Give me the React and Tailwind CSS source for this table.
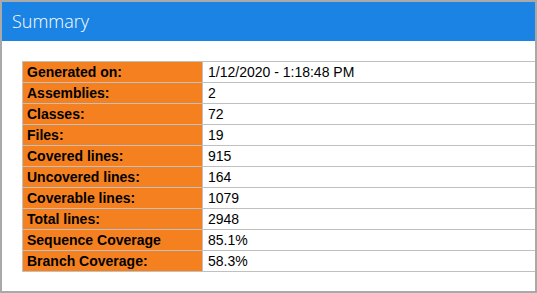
const rows = [
  ["Generated on:", "1/12/2020 - 1:18:48 PM"],
  ["Assemblies:", "2"],
  ["Classes:", "72"],
  ["Files:", "19"],
  ["Covered lines:", "915"],
  ["Uncovered lines:", "164"],
  ["Coverable lines:", "1079"],
  ["Total lines:", "2948"],
  ["Sequence Coverage", "85.1%"],
  ["Branch Coverage:", "58.3%"],
];

export default function App() {
  return (
    <div className="w-[537px] h-[293px] border-2 border-[#a9a9a9] bg-white overflow-hidden">
      <div
        className="h-[39px] bg-[#1a83e3] pl-[10px] flex items-center text-white text-[18px] font-light"
        style={{ fontFamily: '"Open Sans", sans-serif' }}
      >
        Summary
      </div>
      <div className="pt-[20px] pl-[20px]">
        {/* table runs past the card edge, the card clips it */}
        <table
          className="w-[560px] border-collapse text-[14px] text-black"
          style={{ fontFamily: '"Liberation Sans", Arial, sans-serif' }}
        >
          <tbody>
            {rows.map(([label, value]) => (
              <tr key={label} className="h-[21px]">
                <th className="w-[180px] bg-[#f5801f] border border-[#c0c0c0] text-left font-bold pl-[4px] py-0 leading-[20px]">
                  {label}
                </th>
                <td className="border border-[#c0c0c0] pl-[5px] py-0 leading-[20px]">
                  {value}
                </td>
              </tr>
            ))}
          </tbody>
        </table>
      </div>
    </div>
  );
}
